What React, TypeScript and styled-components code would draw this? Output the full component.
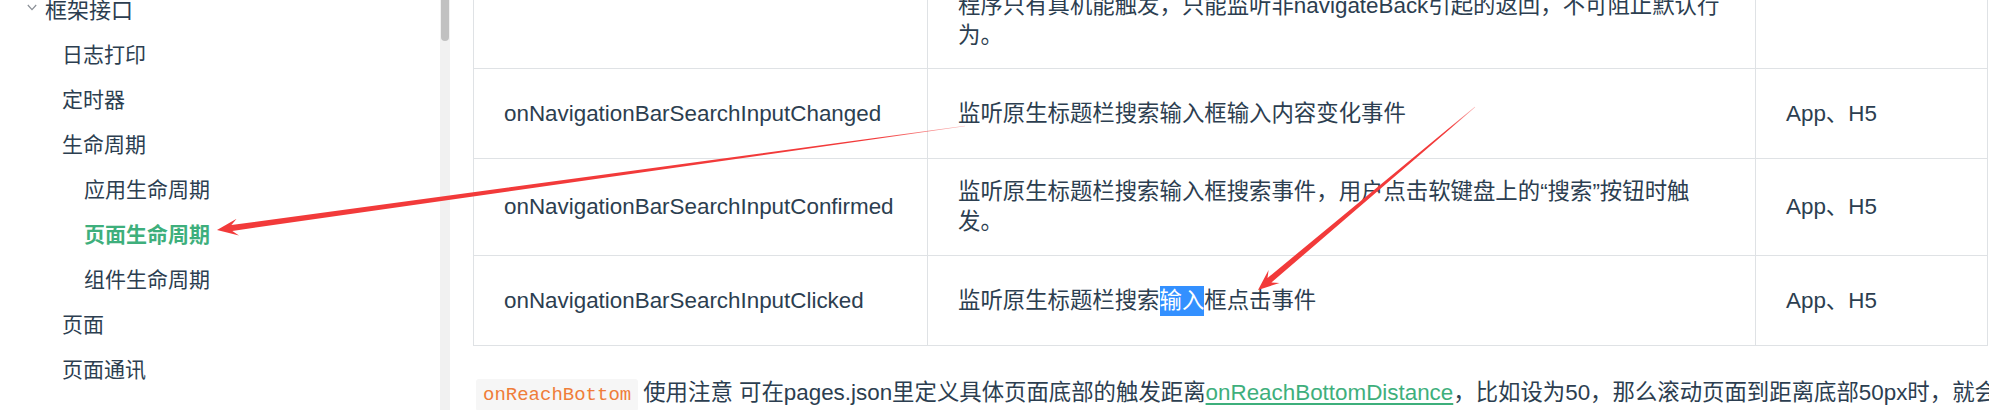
import React from "react";
import styled, { createGlobalStyle } from "styled-components";

const GlobalStyle = createGlobalStyle`
  html, body {
    margin: 0;
    padding: 0;
    background: #ffffff;
    overflow: hidden;
  }
  body {
    font-family: "Liberation Sans", "Noto Sans CJK SC", sans-serif;
    color: #2c3e50;
  }
  * { box-sizing: border-box; }
`;

const Page = styled.div`
  position: relative;
  display: flex;
  width: 1989px;
  height: 410px;
  overflow: hidden;
`;

const Sidebar = styled.nav`
  width: 440px;
  flex: none;
  overflow: hidden;
`;

const SideList = styled.ul`
  list-style: none;
  margin: -15px 0 0;
  padding: 0;
`;

const SideHeading = styled.li`
  display: flex;
  align-items: center;
  gap: 8px;
  height: 45px;
  padding-left: 27px;
  font-size: 22px;
  color: #2c3e50;
`;

const SideItem = styled.li<{ $level: number; $active?: boolean }>`
  display: flex;
  align-items: center;
  height: 45px;
  padding-left: ${(p) => (p.$level === 2 ? 84 : 62)}px;
  font-size: 21px;
  color: ${(p) => (p.$active ? "#3eaf7c" : "#2c3e50")};
  font-weight: ${(p) => (p.$active ? 700 : 400)};
`;

const ScrollTrack = styled.div`
  width: 10px;
  flex: none;
  background: #f1f1f1;
  padding-left: 1px;
  padding-right: 1px;
`;

const ScrollThumb = styled.div`
  height: 41px;
  background: #c1c1c1;
  border-radius: 0 0 4px 4px;
`;

const Main = styled.main`
  flex: 1;
  min-width: 0;
  overflow: hidden;
  padding-left: 23px;
`;

const Table = styled.table`
  border-collapse: collapse;
  table-layout: fixed;
  width: 1515px;
  margin-top: -119px;
  font-size: 22.4px;
  line-height: 30px;
  color: #2c3e50;
`;

const Row = styled.tr<{ $h: number }>`
  height: ${(p) => p.$h}px;
`;

const Cell = styled.td<{ $valign?: "top" | "middle" | "bottom"; $pb?: number }>`
  border: 1px solid #dfe2e5;
  padding: 0 29px ${(p) => p.$pb ?? 0}px 30px;
  vertical-align: ${(p) => p.$valign ?? "middle"};
`;

const Selected = styled.span`
  display: inline-block;
  height: 30px;
  background: #3390ff;
  color: #ffffff;
`;

const Note = styled.p`
  margin: 28px 0 0 3px;
  white-space: nowrap;
  font-size: 22.4px;
  line-height: 38px;
  color: #2c3e50;
`;

const Code = styled.code`
  font-family: "Liberation Mono", "Courier New", monospace;
  font-size: 19px;
  color: #ef7d3a;
  background: #f6f6f6;
  border-radius: 3px;
  padding: 5px 7px;
  margin-right: 5px;
`;

const DocLink = styled.a`
  color: #3eaf7c;
  text-decoration: underline;
  text-underline-offset: 3px;
`;

const Overlay = styled.svg`
  position: absolute;
  left: 0;
  top: 0;
  pointer-events: none;
`;

type Pt = [number, number];

function arrowPoints(s: Pt, t: Pt): string {
  const dx = t[0] - s[0];
  const dy = t[1] - s[1];
  const L = Math.hypot(dx, dy);
  const ux = dx / L;
  const uy = dy / L;
  const nx = -uy;
  const ny = ux;
  const headLen = 21;
  const notch = 6;
  const headHalf = 8.5;
  const neckHalf = 3;
  const tailHalf = 0.3;
  const neck: Pt = [t[0] - (headLen - notch) * ux, t[1] - (headLen - notch) * uy];
  const base: Pt = [t[0] - headLen * ux, t[1] - headLen * uy];
  const pts: Pt[] = [
    [s[0] + tailHalf * nx, s[1] + tailHalf * ny],
    [neck[0] + neckHalf * nx, neck[1] + neckHalf * ny],
    [base[0] + headHalf * nx, base[1] + headHalf * ny],
    t,
    [base[0] - headHalf * nx, base[1] - headHalf * ny],
    [neck[0] - neckHalf * nx, neck[1] - neckHalf * ny],
    [s[0] - tailHalf * nx, s[1] - tailHalf * ny],
  ];
  return pts.map((p) => `${p[0].toFixed(1)},${p[1].toFixed(1)}`).join(" ");
}

const sideItems: { label: string; level: number; active?: boolean }[] = [
  { label: "日志打印", level: 1 },
  { label: "定时器", level: 1 },
  { label: "生命周期", level: 1 },
  { label: "应用生命周期", level: 2 },
  { label: "页面生命周期", level: 2, active: true },
  { label: "组件生命周期", level: 2 },
  { label: "页面", level: 1 },
  { label: "页面通讯", level: 1 },
];

const arrows: { s: Pt; t: Pt; id: string }[] = [
  { s: [965, 126], t: [217, 230], id: "a1" },
  { s: [1475, 107], t: [1258, 290], id: "a2" },
];

export default function App() {
  return (
    <>
      <GlobalStyle />
      <Page>
        <Sidebar>
          <SideList>
            <SideHeading>
              <svg width="10" height="7" viewBox="0 0 10 7">
                <polyline points="0.8,1 5,5.6 9.2,1" fill="none" stroke="#8a8f96" strokeWidth="1.2" />
              </svg>
              框架接口
            </SideHeading>
            {sideItems.map((it) => (
              <SideItem key={it.label} $level={it.level} $active={it.active}>
                {it.label}
              </SideItem>
            ))}
          </SideList>
        </Sidebar>
        <ScrollTrack>
          <ScrollThumb />
        </ScrollTrack>
        <Main>
          <Table>
            <colgroup>
              <col style={{ width: 454 }} />
              <col style={{ width: 828 }} />
              <col style={{ width: 232 }} />
            </colgroup>
            <tbody>
              <Row $h={187}>
                <Cell />
                <Cell $valign="bottom" $pb={17}>
                  程序只有真机能触发，只能监听非navigateBack引起的返回，不可阻止默认行为。
                </Cell>
                <Cell>App、H5、支付宝小程序</Cell>
              </Row>
              <Row $h={90}>
                <Cell>onNavigationBarSearchInputChanged</Cell>
                <Cell>监听原生标题栏搜索输入框输入内容变化事件</Cell>
                <Cell>App、H5</Cell>
              </Row>
              <Row $h={97}>
                <Cell>onNavigationBarSearchInputConfirmed</Cell>
                <Cell>监听原生标题栏搜索输入框搜索事件，用户点击软键盘上的“搜索”按钮时触发。</Cell>
                <Cell>App、H5</Cell>
              </Row>
              <Row $h={90}>
                <Cell>onNavigationBarSearchInputClicked</Cell>
                <Cell>
                  监听原生标题栏搜索<Selected>输入</Selected>框点击事件
                </Cell>
                <Cell>App、H5</Cell>
              </Row>
            </tbody>
          </Table>
          <Note>
            <Code>onReachBottom</Code>
            使用注意 可在pages.json里定义具体页面底部的触发距离
            <DocLink href="#">onReachBottomDistance</DocLink>
            ，比如设为50，那么滚动页面到距离底部50px时，就会触发onReachBottom事件。
          </Note>
        </Main>
        <Overlay width="1989" height="410" viewBox="0 0 1989 410">
          <defs>
            {arrows.map((a) => (
              <linearGradient
                key={a.id}
                id={`g-${a.id}`}
                gradientUnits="userSpaceOnUse"
                x1={a.s[0]}
                y1={a.s[1]}
                x2={a.t[0]}
                y2={a.t[1]}
              >
                <stop offset="0" stopColor="#f23a3a" stopOpacity="0.35" />
                <stop offset="0.12" stopColor="#f23a3a" stopOpacity="1" />
                <stop offset="1" stopColor="#f23a3a" stopOpacity="1" />
              </linearGradient>
            ))}
          </defs>
          {arrows.map((a) => (
            <polygon key={a.id} points={arrowPoints(a.s, a.t)} fill={`url(#g-${a.id})`} />
          ))}
        </Overlay>
      </Page>
    </>
  );
}
